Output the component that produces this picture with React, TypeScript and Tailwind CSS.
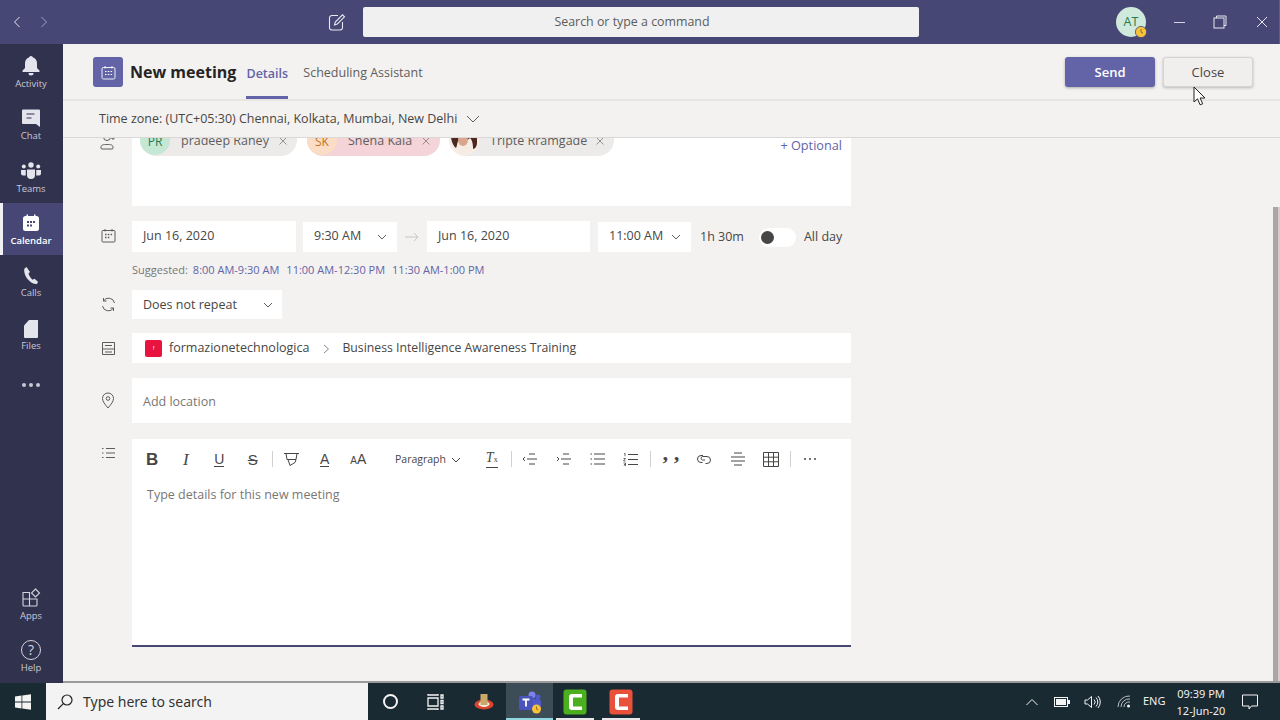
import React from "react";

const S = ({ w = 18, h, vb = "0 0 20 20", c = "", children }: { w?: number; h?: number; vb?: string; c?: string; children: React.ReactNode }) => (
  <svg width={w} height={h ?? w} viewBox={vb} fill="none" stroke="currentColor" strokeWidth="1" className={c}>{children}</svg>
);

const Chev = ({ c = "" }: { c?: string }) => (
  <S w={10} vb="0 0 10 10" c={c}><path d="M1 3l4 4 4-4" /></S>
);

const RailItem = ({ icon, label, active = false }: { icon: React.ReactNode; label: string; active?: boolean }) => (
  <div className={`relative flex h-[52px] flex-col items-center justify-center pr-[1px] ${active ? "bg-[#464775] text-white" : "text-[#c8c8d4]"}`}>
    {active && <div className="absolute left-0 top-0 h-full w-[3px] bg-[#f0f0f5]" />}
    <div className="flex h-[24px] items-center justify-center">{icon}</div>
    <div className={`text-[9.5px] leading-[12px] ${active ? "font-semibold" : ""}`}>{label}</div>
  </div>
);

const Chip = ({ avatar, name, bg, w, ml, avBg, avFg }: { avatar: React.ReactNode; name: string; bg: string; w: string; ml: string; avBg: string; avFg: string }) => (
  <div className={`flex h-[32px] items-center rounded-full ${bg} ${w} ${ml}`}>
    <div className={`flex h-[30px] w-[30px] shrink-0 items-start justify-center overflow-hidden rounded-full pt-[11px] text-[12px] leading-[12px] ${avBg} ${avFg}`}>{avatar}</div>
    <span className="ml-[11px] mt-[2px] text-[12.5px] text-[#605e5c]">{name}</span>
    <svg width="8" height="8" viewBox="0 0 8 8" stroke="#8a8886" strokeWidth="0.9" className="ml-auto mr-[10px] mt-[1px]"><path d="M0.5 0.5l7 7M7.5 0.5l-7 7" /></svg>
  </div>
);

const Tool = ({ children }: { children: React.ReactNode }) => (
  <div className="flex h-[20px] w-[33.5px] shrink-0 items-center justify-center text-[#484644]">{children}</div>
);
const Sep = () => (
  <div className="flex w-[5px] shrink-0 justify-center"><div className="h-[16px] w-px bg-[#d2d0ce]" /></div>
);

const FormRow = ({ icon, children, c = "" }: { icon?: React.ReactNode; children: React.ReactNode; c?: string }) => (
  <div className={`flex pl-[33px] ${c}`}>
    <div className="flex w-[24px] shrink-0 justify-center text-[#5f5d5b]">{icon}</div>
    <div className="ml-[12px] min-w-0 flex-1">{children}</div>
  </div>
);

const DateBox = ({ t, c }: { t: string; c: string }) => (
  <div className={`flex h-full items-center bg-white pl-[11px] ${c}`}>{t}</div>
);
const TimeBox = ({ t, c }: { t: string; c: string }) => (
  <div className={`flex h-[30px] items-center bg-white pl-[11px] pr-[10px] ${c}`}>
    <span>{t}</span>
    <Chev c="ml-auto text-[#605e5c]" />
  </div>
);

const Tile = ({ bg }: { bg: string }) => (
  <svg width="24" height="26" viewBox="0 0 24 26">
    <rect x="0.5" y="0.5" width="23" height="25" rx="3" fill={bg} />
    <path d="M19 5h-10a3 3 0 0 0-3 3v10a3 3 0 0 0 3 3h10v-3.500h-9v-9h9z" fill="#fff" />
  </svg>
);

export default function App() {
  return (
    <div className="flex h-[720px] w-[1280px] flex-col overflow-hidden bg-[#f3f2f1] text-[#484644] [font-family:'Open_Sans','Noto_Sans',sans-serif]">
      {/* Title bar */}
      <div className="flex h-[44px] shrink-0 items-center bg-[#464775] text-[#e8e8f0]">
        <svg width="10" height="12" viewBox="0 0 10 12" stroke="currentColor" fill="none" className="ml-[12px]"><path d="M7.5 1l-5 5 5 5" /></svg>
        <svg width="10" height="12" viewBox="0 0 10 12" stroke="#a3a4c4" fill="none" className="ml-[17px]"><path d="M2.5 1l5 5-5 5" /></svg>
        <svg width="18" height="18" viewBox="0 0 18 18" fill="none" stroke="currentColor" strokeWidth="1.1" className="ml-[279px]">
          <path d="M14.5 9v5.5a2.5 2.5 0 0 1-2.5 2.5H4a2.5 2.5 0 0 1-2.5-2.5V5A2.5 2.5 0 0 1 4 2.5h6" />
          <path d="M6.5 12l.8-3L14.5 1.8l2 2L9.3 11z" />
        </svg>
        <div className="ml-[17px] flex h-[30px] w-[556px] items-center justify-center rounded-[2px] bg-[#f0f0f0] pr-[18px] text-[12.4px] text-[#5c5c5c]">Search or type a command</div>
        <div className="relative ml-[197px] flex h-[30px] w-[30px] items-center justify-center rounded-full bg-[#cfe9dd] text-[12.5px] text-[#237b4b]">
          AT
          <svg width="12" height="12" viewBox="0 0 12 12" className="absolute -bottom-[1px] -right-[1px]">
            <circle cx="6" cy="6" r="5.6" fill="#f8c33c" stroke="#464775" strokeWidth="0.8" />
            <path d="M6 3v3.2l2 1" stroke="#7a5a10" strokeWidth="0.8" fill="none" />
          </svg>
        </div>
        <div className="ml-[28px] h-px w-[11px] bg-[#d5d5e5]" />
        <svg width="14" height="14" viewBox="0 0 14 14" fill="none" stroke="#e8e8f0" className="ml-[28px]">
          <rect x="1" y="3" width="10" height="10" />
          <path d="M3.5 3V1h9.5v9.5H11" />
        </svg>
        <svg width="12" height="12" viewBox="0 0 12 12" stroke="#e8e8f0" className="ml-[29px]"><path d="M1 1l10 10M11 1L1 11" /></svg>
        <div className="ml-auto h-full w-[1px] bg-[#3f7a4f]" />
      </div>

      {/* Body */}
      <div className="flex min-h-0 flex-1">
        {/* Rail */}
        <div className="flex w-[63px] shrink-0 flex-col bg-[#31324e] pt-[2px]">
          <RailItem label="Activity" icon={<svg width="20" height="22" viewBox="0 0 20 22" fill="#e4e4ec"><path d="M10 1a2 2 0 0 1 2 1.6C14.6 3.4 16 5.6 16 8.4V13l2.4 2.6a.8.8 0 0 1-.6 1.4H2.2a.8.8 0 0 1-.6-1.4L4 13V8.4C4 5.6 5.4 3.4 8 2.6A2 2 0 0 1 10 1z" /><path d="M7.5 18h5a2.5 2.5 0 0 1-5 0z" /></svg>} />
          <RailItem label="Chat" icon={<svg width="20" height="20" viewBox="0 0 20 20"><path d="M2 1.5h16a1 1 0 0 1 1 1V19l-4-3H2a1 1 0 0 1-1-1V2.500a1 1 0 0 1 1-1z" fill="#e4e4ec" /><path d="M5.500 6h8M5.500 10h5" stroke="#33344a" strokeWidth="1.2" /></svg>} />
          <div className="h-[1px] shrink-0" />
          <RailItem label="Teams" icon={<svg width="22" height="18" viewBox="0 0 22 18" fill="#e4e4ec"><circle cx="11" cy="3" r="2.700" /><circle cx="3.800" cy="4.500" r="2" /><circle cx="18.200" cy="4.500" r="2" /><path d="M7 7.500h8v5.500a4 4 0 0 1-8 0z" /><path d="M1 8h4.800v5.500h-2.800A2 2 0 0 1 1 11.500zM21 8h-4.800v5.500h2.800a2 2 0 0 0 2-2z" /></svg>} />
          <RailItem active label="Calendar" icon={<svg width="18" height="18" viewBox="0 0 18 18"><rect x="1" y="2" width="16" height="15" rx="2.500" fill="#fff" /><rect x="4.500" y="0.500" width="1.500" height="3" fill="#fff" /><rect x="12" y="0.500" width="1.500" height="3" fill="#fff" /><path d="M5 7h2v2H5zM8 7h2v2H8zM11 7h2v2h-2zM5 10.500h2v2H5zM8 10.500h2v2H8z" fill="#464775" /></svg>} />
          <RailItem label="Calls" icon={<svg width="16" height="19" viewBox="0 0 16 19"><path d="M3.500 1L1.500 2.500C.5 5 2 10 5 13.500s6.500 5 9 4.500l1-2.200-3.500-3-2 1C8 12.500 6 9.500 5.500 7.500L7 6z" fill="#e4e4ec" /></svg>} />
          <div className="h-[1px] shrink-0" />
          <RailItem label="Files" icon={<svg width="16" height="19" viewBox="0 0 16 19"><path d="M6 1h9v17a1 1 0 0 1-1 1H2a1 1 0 0 1-1-1V6.500z" fill="#e4e4ec" /></svg>} />
          <div className="mt-[10px] flex h-[30px] items-center justify-center gap-[3.500px] pr-[1px]">
            <div className="h-[3.500px] w-[3.500px] rounded-full bg-[#c8c8d4]" />
            <div className="h-[3.500px] w-[3.500px] rounded-full bg-[#c8c8d4]" />
            <div className="h-[3.500px] w-[3.500px] rounded-full bg-[#c8c8d4]" />
          </div>
          <div className="flex-1" />
          <RailItem label="Apps" icon={<svg width="20" height="20" viewBox="0 0 20 20" fill="none" stroke="#d4d4de" strokeWidth="1.100"><path d="M2 4.500h6.500V18H3a1 1 0 0 1-1-1zM2 11h14v6a1 1 0 0 1-1 1H8.500M8.500 11V4.500M16 11H11.500V11" /><path d="M14.500 1l4 4-4 4-4-4z" /></svg>} />
          <RailItem label="Help" icon={<div className="flex h-[20px] w-[20px] items-center justify-center rounded-full border border-[#d4d4de] text-[14px] leading-none text-[#d4d4de]">?</div>} />
          <div className="h-[1px] shrink-0" />
        </div>

        {/* Main */}
        <div className="flex min-w-0 flex-1 flex-col border-b-2 border-[#9a9a9a]">
          {/* Header */}
          <div className="flex h-[57px] shrink-0 items-center border-b-2 border-[#e6e5e4] pl-[30px] pr-[27px] pt-[1px]">
            <div className="flex h-[30px] w-[30px] items-center justify-center rounded-[3px] bg-[#6264a7] text-white">
              <svg width="15" height="15" viewBox="0 0 15 15" fill="none" stroke="currentColor" strokeWidth="0.9"><rect x="1" y="2.500" width="13" height="11.500" rx="1.500" /><path d="M4 1v2.500M11 1v2.500" /><path d="M4 6.500h1.500M6.800 6.500h1.500M9.600 6.500h1.500M4 9.500h1.500M6.800 9.500h1.500M9.600 9.500h1.500" strokeWidth="1.200" /></svg>
            </div>
            <div className="ml-[7px] text-[16px] font-bold text-[#252423]">New meeting</div>
            <div className="relative ml-[10px] flex h-[54px] w-[42px] items-center justify-center pt-[4px] text-[12.500px] font-semibold text-[#6264a7]">
              Details
              <div className="absolute bottom-0 left-0 h-[3px] w-full bg-[#6264a7]" />
            </div>
            <div className="ml-[15px] mt-[3px] text-[12.500px] text-[#605e5c]">Scheduling Assistant</div>
            <div className="ml-auto flex h-[30px] w-[90px] items-center justify-center rounded-[3px] bg-[#6264a7] pt-[2px] text-[13px] font-semibold text-white shadow-[0_1px_3px_rgba(0,0,0,0.3)]">Send</div>
            <div className="relative ml-[8px] flex h-[30px] w-[90px] items-center justify-center rounded-[3px] border border-[#d5d4d3] bg-[#f0efee] pt-[2px] text-[13px] text-[#484644] shadow-[0_1px_3px_rgba(0,0,0,0.25)]">
              Close
              <svg width="14" height="21" viewBox="0 0 14 21" className="absolute left-[29px] top-[28px]"><path d="M1 1v15l3.500-3.200 2.600 6 2.600-1-2.600-5.800h4.900z" fill="#fff" stroke="#222" strokeWidth="1" /></svg>
            </div>
          </div>

          {/* Time zone */}
          <div className="flex h-[37px] shrink-0 items-center border-b border-[#d9d8d7] pl-[36px] text-[12.500px] text-[#484644]">
            <span>Time zone: (UTC+05:30) Chennai, Kolkata, Mumbai, New Delhi</span>
            <S w={14} vb="0 0 14 14" c="ml-[9px] text-[#605e5c]"><path d="M1 4l6 6 6-6" /></S>
          </div>

          {/* Form + scrollbar */}
          <div className="flex min-h-0 flex-1 overflow-hidden">
            <div className="w-[788px] shrink-0 overflow-hidden">
              <FormRow
                icon={
                  <svg width="16" height="20" viewBox="0 0 16 20" fill="none" stroke="currentColor" className="-mt-[4px]"><circle cx="7" cy="3" r="3.500" /><path d="M1 13c0-2 2-2.500 6-2.500s6 .5 6 2.500v1a1 1 0 0 1-1 1H2a1 1 0 0 1-1-1z" /><path d="M13 2v4M11 4h4" /></svg>
                }
              >
                <div className="relative flow-root h-[68px] bg-white">
                  <div className="-mt-[14px] flex">
                    <Chip avatar="PR" name="pradeep Raney" bg="bg-[#edebe9]" w="w-[157px]" ml="ml-[8px]" avBg="bg-[#c5e8d5]" avFg="text-[#237b4b]" />
                    <Chip avatar="SK" name="Sneha Kala" bg="bg-[#f4d4d9]" w="w-[133px]" ml="ml-[10px]" avBg="bg-[#fbdcc4]" avFg="text-[#c4741f]" />
                    <Chip
                      avatar={
                        <svg width="30" height="30" viewBox="0 0 30 30" className="-mt-[11px]">
                          <rect width="30" height="30" fill="#f6ece4" />
                          <path d="M2 0h26v18c0 3-2 6-4 6 0-6-1-9-3-11-3 3-9 4-12 3-1 3-1 5-2 7-3-2-5-8-5-12z" fill="#4a2a20" />
                          <ellipse cx="14" cy="15" rx="5" ry="6" fill="#d9a58c" />
                        </svg>
                      }
                      name="Tripte Rramgade"
                      bg="bg-[#edebe9]"
                      w="w-[165px]"
                      ml="ml-[9px]"
                      avBg="bg-white"
                      avFg=""
                    />
                  </div>
                  <div className="absolute right-[9px] top-0 text-[12.700px] leading-[14px] text-[#6264a7]">+ Optional</div>
                </div>
              </FormRow>

              <FormRow
                c="mt-[15px]"
                icon={
                  <svg width="15" height="15" viewBox="0 0 15 15" fill="none" stroke="currentColor" className="mt-[7px]"><rect x="1" y="2.500" width="13" height="11.500" rx="1" /><path d="M4 1v2.500M11 1v2.500" /><path d="M4 6.500h1.500M6.800 6.500h1.500M9.600 6.500h1.500M4 9.500h1.500M6.800 9.500h1.500" strokeWidth="1.300" /></svg>
                }
              >
                <div className="flex h-[31px] items-center text-[12.500px] text-[#484644]">
                  <DateBox t="Jun 16, 2020" c="w-[164px]" />
                  <TimeBox t="9:30 AM" c="ml-[7px] w-[94px]" />
                  <svg width="14" height="10" viewBox="0 0 14 10" fill="none" stroke="#c8c6c4" className="ml-[8px]"><path d="M0 5h13M9 1l4 4-4 4" /></svg>
                  <DateBox t="Jun 16, 2020" c="ml-[8px] w-[163px]" />
                  <TimeBox t="11:00 AM" c="ml-[8px] w-[93px]" />
                  <span className="ml-[9px] mt-[1px]">1h 30m</span>
                  <div className="ml-[15px] mt-[2px] flex h-[19px] w-[37px] items-center rounded-full bg-white pl-[2px]">
                    <div className="h-[13px] w-[13px] rounded-full bg-[#484644]" />
                  </div>
                  <span className="ml-[8px] mt-[1px]">All day</span>
                </div>
              </FormRow>

              <FormRow c="mt-[10px]">
                <div className="flex h-[16px] items-center text-[11px]">
                  <span className="text-[#797775]">Suggested:</span>
                  <span className="ml-[5px] text-[#6264a7]">8:00 AM-9:30 AM</span>
                  <span className="ml-[7px] text-[#6264a7]">11:00 AM-12:30 PM</span>
                  <span className="ml-[7px] text-[#6264a7]">11:30 AM-1:00 PM</span>
                </div>
              </FormRow>

              <FormRow
                c="mt-[12px]"
                icon={
                  <svg width="15" height="15" viewBox="0 0 15 15" fill="none" stroke="currentColor" className="mt-[7px]"><path d="M13.500 6A6 6 0 0 0 2.500 4M1.500 9a6 6 0 0 0 11 2" /><path d="M2.500 1v3H5.500M12.500 14v-3h-3" /></svg>
                }
              >
                <div className="flex h-[29px] w-[150px] items-center bg-white pl-[11px] pr-[9px] pt-[1px] text-[12.500px] text-[#484644]">
                  Does not repeat
                  <Chev c="ml-auto text-[#605e5c]" />
                </div>
              </FormRow>

              <FormRow
                c="mt-[14px]"
                icon={
                  <svg width="15" height="15" viewBox="0 0 15 15" fill="none" stroke="currentColor" className="mt-[8px]"><path d="M1.500 1.500h12v12h-12zM1.500 8h12M4 4.500h7M4 11h7" /></svg>
                }
              >
                <div className="flex h-[30px] items-center bg-white pl-[13px] pt-[1px] text-[12.500px] text-[#484644]">
                  <div className="-mt-[1px] flex h-[17px] w-[17px] items-center justify-center rounded-[2px] bg-[#e8133f] text-[5px] leading-none text-white">f</div>
                  <span className="ml-[7px]">formazionetechnologica</span>
                  <svg width="7" height="10" viewBox="0 0 7 10" fill="none" stroke="#8a8886" className="ml-[14px]"><path d="M1 1l4.500 4L1 9" /></svg>
                  <span className="ml-[12px] text-[12.250px]">Business Intelligence Awareness Training</span>
                </div>
              </FormRow>

              <FormRow
                c="mt-[15px]"
                icon={
                  <svg width="14" height="17" viewBox="0 0 14 17" fill="none" stroke="currentColor" className="mt-[14px]"><path d="M7 16C4 12.500 1.500 9.500 1.500 6.500a5.500 5.500 0 0 1 11 0C12.500 9.500 10 12.500 7 16z" /><circle cx="7" cy="6.500" r="1.800" /></svg>
                }
              >
                <div className="flex h-[45px] items-center bg-white pl-[11px] pt-[3px] text-[12.500px] text-[#797775]">Add location</div>
              </FormRow>

              <FormRow
                c="mt-[16px]"
                icon={
                  <svg width="15" height="12" viewBox="0 0 15 12" fill="none" stroke="currentColor" className="mt-[8px]"><path d="M5 1.500h9M5 6h9M5 10.500h9M1 1.500h1.500M1 6h1.500M1 10.500h1.500" /></svg>
                }
              >
                <div className="h-[208px] border-b-2 border-[#464775] bg-white">
                  <div className="flex items-center pl-[3.500px] pt-[10px]">
                    <Tool><span className="text-[17px] font-bold leading-none [font-family:'Liberation_Sans',sans-serif]">B</span></Tool>
                    <Tool><span className="text-[17px] italic leading-none [font-family:'Liberation_Serif',serif]">I</span></Tool>
                    <Tool><span className="border-b border-[#484644] text-[14px] font-light leading-[14px] [font-family:'Liberation_Sans',sans-serif]">U</span></Tool>
                    <Tool><span className="text-[15px] leading-none line-through [font-family:'Liberation_Sans',sans-serif]">S</span></Tool>
                    <Sep />
                    <Tool><svg width="17" height="15" viewBox="0 0 17 15" fill="none" stroke="currentColor"><path d="M1 1.500h15M3 1.500l1 6h9l1-6M5 7.500l2 6 5-3 1-3" /></svg></Tool>
                    <Tool><span className="border-b border-[#484644] text-[14px] leading-[14px] [font-family:'Liberation_Sans',sans-serif]">A</span></Tool>
                    <Tool><span className="text-[14px] leading-none [font-family:'Liberation_Sans',sans-serif]"><span className="text-[10px]">A</span>A</span></Tool>
                    <div className="ml-[20px] mt-[1px] flex w-[66px] shrink-0 items-center text-[10.500px] text-[#484644]">
                      Paragraph
                      <Chev c="ml-auto" />
                    </div>
                    <div className="w-[14px] shrink-0" />
                    <Tool><span className="border-b border-[#484644] text-[14px] italic leading-[14px] [font-family:'Liberation_Serif',serif]">T<span className="text-[8px] not-italic">x</span></span></Tool>
                    <Sep />
                    <Tool><svg width="16" height="12" viewBox="0 0 16 12" fill="none" stroke="currentColor"><path d="M7 1h6M5 6h10M7 11h6M3 4L1 6l2 2" /></svg></Tool>
                    <Tool><svg width="16" height="12" viewBox="0 0 16 12" fill="none" stroke="currentColor"><path d="M7 1h6M5 6h10M7 11h6M1 4l2 2-2 2" /></svg></Tool>
                    <Tool><svg width="15" height="12" viewBox="0 0 15 12" fill="none" stroke="currentColor"><path d="M4 1h11M4 6h11M4 11h11M0.500 1h1.500M0.500 6h1.500M0.500 11h1.500" /></svg></Tool>
                    <Tool><svg width="15" height="13" viewBox="0 0 15 13" fill="none" stroke="currentColor"><path d="M5 1.500h10M5 6.500h10M5 11.500h10" /><path d="M1 0.500l1-.3v3M.5 5.500h2l-2 2.500h2M.5 10h2v3h-2M1 11.500h1.500" strokeWidth="0.800" /></svg></Tool>
                    <Sep />
                    <div className="w-[1.500px] shrink-0" />
                    <Tool><span className="mt-[9px] text-[22px] font-bold leading-none [font-family:'Liberation_Serif',serif]">’ ’</span></Tool>
                    <Tool><svg width="16" height="12" viewBox="0 0 16 12" fill="none" stroke="currentColor"><path d="M7 2.500H5a3.500 3.500 0 0 0 0 7h1.500M9 7H6.500a1.800 1.800 0 0 1 0-3.500H11a3.500 3.500 0 0 1 0 7H9.500" /></svg></Tool>
                    <Tool><svg width="16" height="14" viewBox="0 0 16 14" fill="none" stroke="currentColor"><path d="M4 1h8M1 5h14M1 9h14M4 13h8" /></svg></Tool>
                    <Tool><svg width="16" height="15" viewBox="0 0 16 15" fill="none" stroke="currentColor"><path d="M.5.500h15v14H.5zM5.500.500v14M10.500.500v14M.5 5.200h15M.5 9.800h15" /></svg></Tool>
                    <Sep />
                    <Tool><div className="flex gap-[2.500px]"><div className="h-[2.500px] w-[2.500px] rounded-full bg-[#484644]" /><div className="h-[2.500px] w-[2.500px] rounded-full bg-[#484644]" /><div className="h-[2.500px] w-[2.500px] rounded-full bg-[#484644]" /></div></Tool>
                  </div>
                  <div className="ml-[15px] mt-[17px] text-[12.500px] leading-[18px] text-[#797775]">Type details for this new meeting</div>
                </div>
              </FormRow>
            </div>
            <div className="flex-1" />
            <div className="mt-[69px] h-full w-[5px] shrink-0 bg-[#a8a7a6]" />
            <div className="mt-[69px] h-full w-[2px] shrink-0 bg-[#dccaca]" />
          </div>
        </div>
      </div>

      {/* Taskbar */}
      <div className="flex h-[37px] shrink-0 items-center bg-[#1a2a33] text-[#f0f0f0]">
        <svg width="16" height="16" viewBox="0 0 16 16" fill="#f4f4f4" className="ml-[15px]"><path d="M0 2.400l6.500-.9v6H0zM7.300 1.400L16 .2v7.300H7.300zM0 8.500h6.500v6L0 13.600zM7.300 8.500H16v7.300l-8.700-1.200z" /></svg>
        <div className="ml-[15px] flex h-[37px] w-[322px] items-center bg-[#f3f3f3] pl-[11px] text-[#333]">
          <svg width="16" height="16" viewBox="0 0 16 16" fill="none" stroke="#222" strokeWidth="1.200"><circle cx="10" cy="6" r="5" /><path d="M6.300 9.700L1 15" /></svg>
          <span className="ml-[10px] text-[14px] [font-family:'Noto_Sans',sans-serif]">Type here to search</span>
        </div>
        <div className="ml-[15px] h-[15px] w-[15px] rounded-full border-2 border-[#f4f4f4]" />
        <svg width="17" height="16" viewBox="0 0 17 16" fill="none" stroke="#f4f4f4" strokeWidth="1.300" className="ml-[29px]"><path d="M1 0v1h10V0M1 16v-1h10v1M1 4h10v8H1zM14 1h2v3h-2zM14 6.500h2v3h-2zM14 12h2v3h-2z" /></svg>
        <svg width="20" height="18" viewBox="0 0 20 18" className="ml-[30px]"><ellipse cx="10" cy="11.500" rx="9.500" ry="5" fill="#d8442e" /><ellipse cx="10" cy="11" rx="5.500" ry="3" fill="#f4ead8" /><rect x="6.500" y="1" width="7" height="11" fill="#c9a86a" /></svg>
        <div className="relative ml-[12px] flex h-[37px] w-[47px] items-center justify-center bg-[#3c4d58]">
          <svg width="24" height="24" viewBox="0 0 24 24">
            <circle cx="14" cy="5" r="3.500" fill="#7b83eb" />
            <circle cx="20" cy="7" r="2.500" fill="#5059c9" />
            <rect x="12" y="9" width="11" height="10" rx="3" fill="#5059c9" />
            <rect x="1" y="6" width="14" height="14" rx="1.500" fill="#4b53bc" />
            <path d="M4.500 9.500h7M8 9.500v7" stroke="#fff" strokeWidth="1.800" />
            <circle cx="18.500" cy="19" r="4.500" fill="#f8c33c" />
            <path d="M18.500 16.500v2.700l1.800.8" stroke="#7a5a10" strokeWidth="0.800" fill="none" />
          </svg>
          <div className="absolute bottom-0 left-0 h-[2px] w-full bg-[#8fd8e0]" />
        </div>
        <div className="relative ml-[3px] flex h-[37px] w-[38px] items-center justify-center">
          <Tile bg="#4caf1e" />
          <div className="absolute bottom-0 left-0 h-[2px] w-full bg-[#e8e8e8]" />
        </div>
        <div className="relative ml-[8px] flex h-[37px] w-[38px] items-center justify-center">
          <Tile bg="#e8523a" />
          <div className="absolute bottom-0 left-0 h-[2px] w-full bg-[#e8e8e8]" />
        </div>
        <div className="flex-1" />
        <svg width="12" height="8" viewBox="0 0 12 8" fill="none" stroke="#f4f4f4"><path d="M.5 7L6 1.500 11.500 7" /></svg>
        <svg width="16" height="10" viewBox="0 0 16 10" className="ml-[16px]"><rect x=".5" y=".5" width="13" height="9" fill="none" stroke="#f4f4f4" /><rect x="2" y="2" width="10" height="6" fill="#f4f4f4" /><rect x="14" y="3" width="2" height="4" fill="#f4f4f4" /></svg>
        <svg width="17" height="14" viewBox="0 0 17 14" fill="none" stroke="#f4f4f4" className="ml-[13.500px]"><path d="M1 5h2.500L7.500 1.500v11L3.500 9H1zM10 4.500a3.500 3.500 0 0 1 0 5M12 2.500a6.500 6.500 0 0 1 0 9M14 1a9 9 0 0 1 0 12" /></svg>
        <svg width="14" height="13" viewBox="0 0 14 13" fill="none" stroke="#b8bec2" className="ml-[16.500px]"><path d="M1 12A11 11 0 0 1 13 1M4 12A8 8 0 0 1 13 4M7 12a5 5 0 0 1 6-5" /><circle cx="11.500" cy="11" r="1.500" fill="#f4f4f4" stroke="none" /></svg>
        <span className="ml-[12px] w-[26px] text-[11px] [font-family:'Noto_Sans',sans-serif]">ENG</span>
        <div className="ml-[1px] flex w-[62px] flex-col items-center text-[11px] leading-[17px] [font-family:'Noto_Sans',sans-serif]">
          <span>09:39 PM</span>
          <span>12-Jun-20</span>
        </div>
        <svg width="16" height="16" viewBox="0 0 16 16" fill="none" stroke="#f4f4f4" className="ml-[10px] mr-[22px]"><path d="M.5 1h15v11H9.500l-2.500 3v-3H.5z" /></svg>
      </div>
    </div>
  );
}
